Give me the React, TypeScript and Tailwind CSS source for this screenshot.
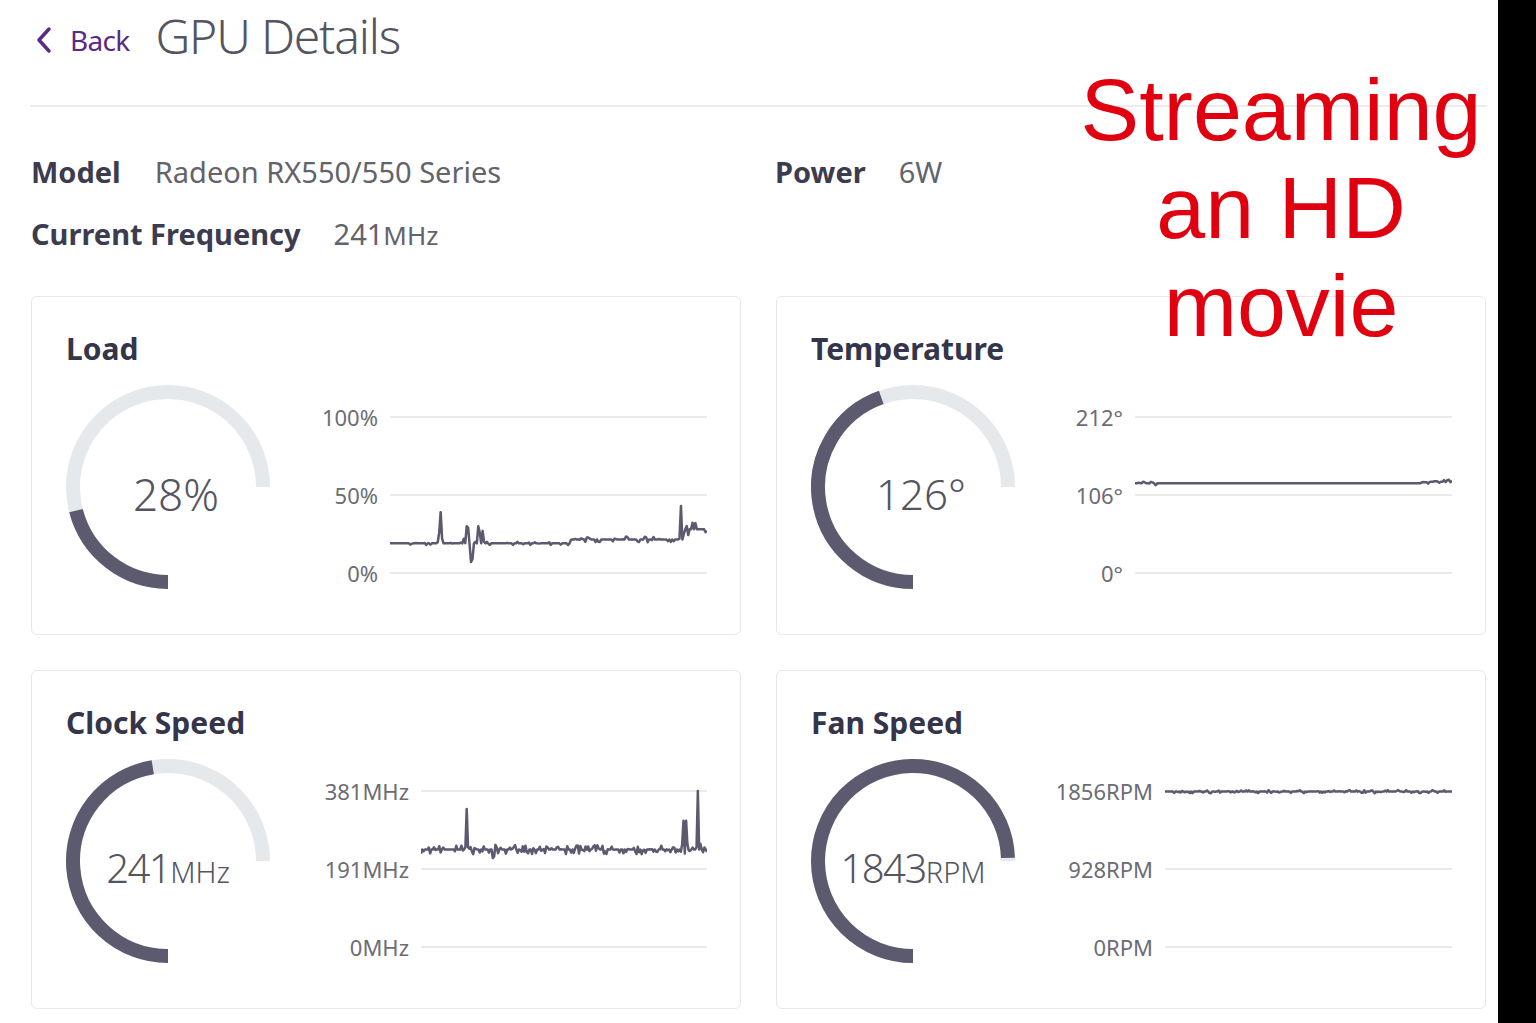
import React from "react";

type Card = {
  title: string;
  value: string;
  unit?: string;
  frac: number;
  labels: string[];
  labelW: string;
  valueCls: string;
  data: number[];
};

// small seeded random, so every render draws the same lines
function rng(seed: number) {
  let s = seed;
  return () => {
    s = (s + 0x6d2b79f5) | 0;
    let t = Math.imul(s ^ (s >>> 15), 1 | s);
    t = (t + Math.imul(t ^ (t >>> 7), 61 | t)) ^ t;
    return ((t ^ (t >>> 14)) >>> 0) / 4294967296;
  };
}

function series(
  n: number,
  seed: number,
  base: (x: number) => number,
  noise: (x: number) => number,
  chance: number,
  spikes: [number, number][]
) {
  const r = rng(seed);
  const out: number[] = [];
  for (let i = 0; i < n; i++) {
    const x = i / (n - 1);
    let v = base(x);
    if (r() < chance) v += (r() - 0.5) * 2 * noise(x);
    out.push(v);
  }
  spikes.forEach(([x, v]) => {
    out[Math.round(x * (n - 1))] = v;
  });
  return out;
}

const loadData = series(
  220,
  11,
  (x) => (x < 0.57 ? 0.19 : x < 0.93 ? 0.215 : 0.28),
  (x) => (x < 0.57 ? 0.012 : x < 0.93 ? 0.02 : 0.05),
  0.35,
  [
    [0.155, 0.26],
    [0.16, 0.39],
    [0.165, 0.22],
    [0.235, 0.22],
    [0.24, 0.3],
    [0.245, 0.29],
    [0.25, 0.18],
    [0.255, 0.07],
    [0.26, 0.09],
    [0.268, 0.2],
    [0.277, 0.3],
    [0.285, 0.26],
    [0.29, 0.27],
    [0.295, 0.2],
    [0.915, 0.22],
    [0.92, 0.43],
    [0.925, 0.25],
    [1, 0.27],
  ]
);

const tempData = series(
  200,
  5,
  (x) => (x < 0.9 ? 0.575 : 0.58 + (x - 0.9) * 0.12),
  (x) => (x < 0.07 || x > 0.9 ? 0.012 : 0),
  0.5,
  []
);

const clockData = series(
  220,
  23,
  () => 0.625,
  () => 0.03,
  0.6,
  [
    [0.155, 0.64],
    [0.16, 0.885],
    [0.165, 0.64],
    [0.25, 0.57],
    [0.255, 0.58],
    [0.915, 0.66],
    [0.918, 0.81],
    [0.925, 0.81],
    [0.93, 0.66],
    [0.965, 0.64],
    [0.97, 1.0],
    [0.975, 0.66],
    [1, 0.61],
  ]
);

const fanData = series(220, 41, () => 0.996, () => 0.01, 0.45, []);

const cards: Card[] = [
  {
    title: "Load",
    value: "28%",
    frac: 0.28,
    labels: ["100%", "50%", "0%"],
    labelW: "w-[68px]",
    valueCls: "pl-[16px] text-[44px]",
    data: loadData,
  },
  {
    title: "Temperature",
    value: "126°",
    frac: 126 / 212,
    labels: ["212°", "106°", "0°"],
    labelW: "w-[68px]",
    valueCls: "pl-[16px] text-[42px]",
    data: tempData,
  },
  {
    title: "Clock Speed",
    value: "241",
    unit: "MHz",
    frac: 241 / 381,
    labels: ["381MHz", "191MHz", "0MHz"],
    labelW: "w-[99px]",
    valueCls: "pl-0 text-[40px] tracking-[-1.5px]",
    data: clockData,
  },
  {
    title: "Fan Speed",
    value: "1843",
    unit: "RPM",
    frac: 1843 / 1856,
    labels: ["1856RPM", "928RPM", "0RPM"],
    labelW: "w-[98px]",
    valueCls: "pl-0 text-[40px] tracking-[-1.5px]",
    data: fanData,
  },
];

function arc(cx: number, cy: number, r: number, from: number, to: number) {
  const a = (from * Math.PI) / 180;
  const b = (to * Math.PI) / 180;
  const x1 = cx + r * Math.cos(a);
  const y1 = cy + r * Math.sin(a);
  const x2 = cx + r * Math.cos(b);
  const y2 = cy + r * Math.sin(b);
  const large = to - from > 180 ? 1 : 0;
  return `M ${x1} ${y1} A ${r} ${r} 0 ${large} 1 ${x2} ${y2}`;
}

function Gauge({ card }: { card: Card }) {
  return (
    <div className="relative w-[204px] h-[204px] shrink-0">
      <svg width="204" height="204" viewBox="0 0 204 204" className="block">
        <path d={arc(102, 102, 95, 90, 360)} fill="none" stroke="#e6e9ec" strokeWidth="14" />
        <path d={arc(102, 102, 95, 90, 90 + 270 * card.frac)} fill="none" stroke="#5c5a6f" strokeWidth="14" />
      </svg>
      <div className={`absolute inset-0 flex items-center justify-center pt-[14px] font-light text-[#55555f] leading-none ${card.valueCls}`}>
        <span>
          {card.value}
          {card.unit && <span className="text-[29px] tracking-normal">{card.unit}</span>}
        </span>
      </div>
    </div>
  );
}

function Plot({ data }: { data: number[] }) {
  const pts = data
    .map((v, i) => `${(i / (data.length - 1)) * 1000},${39 + (1 - v) * 156}`)
    .join(" ");
  return (
    <div className="flex-1 min-w-0">
      <svg className="block w-full h-[234px]" viewBox="0 0 1000 234" preserveAspectRatio="none">
        {[39, 117, 195].map((y) => (
          <line key={y} x1="0" x2="1000" y1={y} y2={y} stroke="#e3e3e3" strokeWidth="1.5" vectorEffect="non-scaling-stroke" />
        ))}
        <polyline
          points={pts}
          fill="none"
          stroke="#5c5a6f"
          strokeWidth="2.5"
          strokeLinejoin="round"
          vectorEffect="non-scaling-stroke"
        />
      </svg>
    </div>
  );
}

function StatCard({ card }: { card: Card }) {
  return (
    <div className="border border-[#e8e8ea] rounded-md pt-[32px] pb-[45px] pl-[34px] pr-[33px]">
      <h3 className="text-[30px] font-bold text-[#34344a] leading-[40px]">{card.title}</h3>
      <div className="flex items-start h-[204px] mt-[16px]">
        <Gauge card={card} />
        <div className="flex-1 min-w-0 flex ml-[40px] mt-[-7px] gap-[12px]">
          <div className={`${card.labelW} shrink-0 flex flex-col`}>
            {card.labels.map((l) => (
              <div key={l} className="h-[78px] flex items-center justify-end text-[22px] text-[#6c6c74]">
                {l}
              </div>
            ))}
          </div>
          <Plot data={card.data} />
        </div>
      </div>
    </div>
  );
}

export default function App() {
  return (
    <div className="flex w-full h-[1023px] overflow-hidden font-['Noto_Sans','Open_Sans',sans-serif]">
      <div className="relative w-[1498px] shrink-0 bg-white pl-[31px] pr-[11px]">
        {/* Header */}
        <div className="flex items-baseline h-[78px]">
          <div className="flex items-center text-[#5a2a84] mr-[26px]">
            <svg width="18" height="28" viewBox="0 0 18 28" className="ml-[4px] mr-[17px] self-center">
              <polyline points="14,3 4,14 14,25" fill="none" stroke="#5a2a84" strokeWidth="3.5" strokeLinecap="round" strokeLinejoin="round" />
            </svg>
            <span className="text-[28px] tracking-tight">Back</span>
          </div>
          <h1 className="text-[48px] font-light text-[#55555f] tracking-tight">GPU Details</h1>
        </div>
        <div className="h-[2px] bg-[#ececec] mt-[27px] w-[1457px] -ml-[1px]" />

        {/* Info rows */}
        <div className="mt-[34px] grid grid-cols-[710px_710px] gap-x-[35px]">
          <div className="h-[62px] flex items-center gap-[34px]">
            <span className="text-[29px] font-bold text-[#3c3c4e]">Model</span>
            <span className="text-[29px] text-[#62636b]">Radeon RX550/550 Series</span>
          </div>
          <div className="h-[62px] flex items-center gap-[33px] -ml-[1px]">
            <span className="text-[29px] font-bold text-[#3c3c4e]">Power</span>
            <span className="text-[29px] text-[#62636b]">6W</span>
          </div>
          <div className="h-[62px] flex items-center gap-[33px]">
            <span className="text-[29px] font-bold text-[#3c3c4e]">Current Frequency</span>
            <span className="text-[29px] text-[#62636b]">
              241<span className="text-[26px]">MHz</span>
            </span>
          </div>
        </div>

        {/* Cards */}
        <div className="mt-[31px] grid grid-cols-[710px_710px] gap-x-[35px] gap-y-[35px]">
          {cards.map((c) => (
            <StatCard key={c.title} card={c} />
          ))}
        </div>

        {/* annotation */}
        <div className="absolute left-[1031px] top-[61px] w-[500px] text-center text-[88px] leading-[98px] text-[#e1000f] font-['Liberation_Sans',Arial,sans-serif]">
          Streaming
          <br />
          an HD
          <br />
          movie
        </div>
      </div>
      <div className="flex-1 bg-black" />
    </div>
  );
}
